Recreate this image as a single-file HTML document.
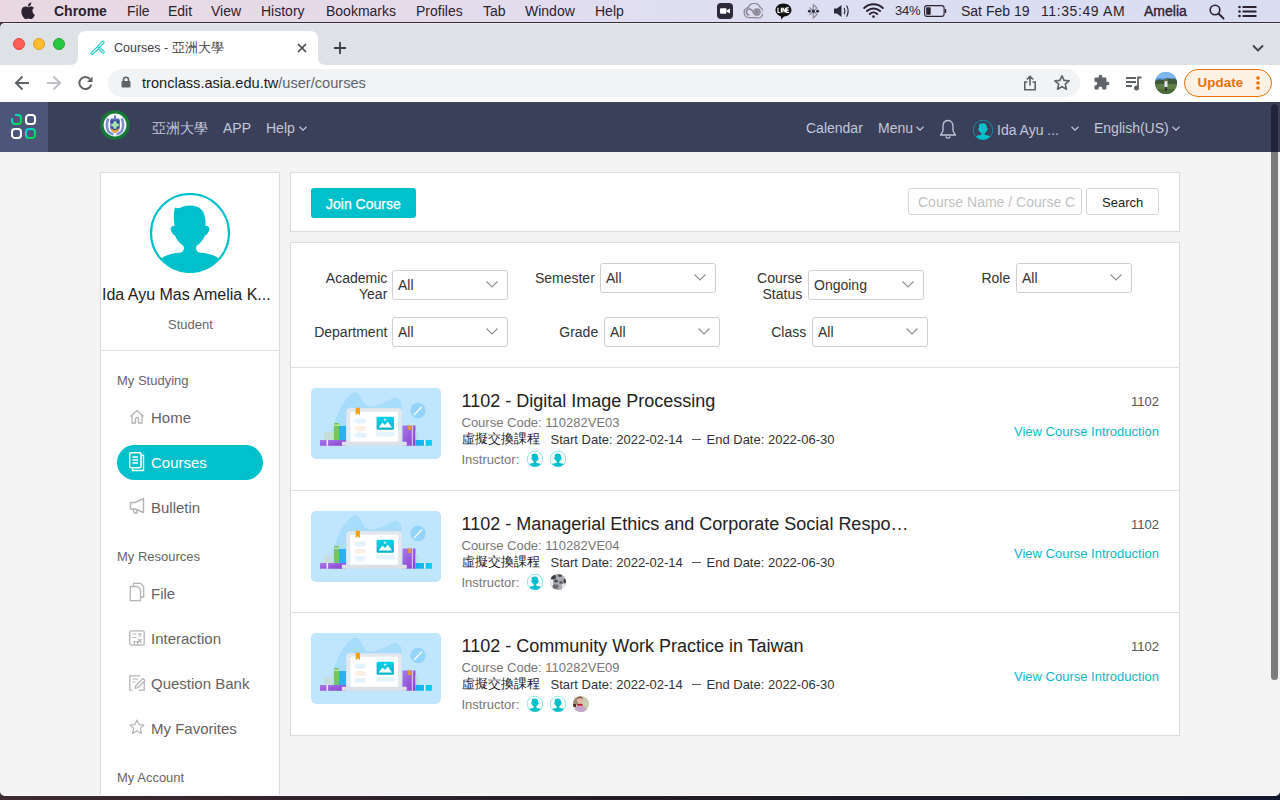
<!DOCTYPE html>
<html><head><meta charset="utf-8">
<style>
*{box-sizing:border-box;margin:0;padding:0;white-space:nowrap}
html,body{width:1280px;height:800px;overflow:hidden;background:#f3f3f3;font-family:"Liberation Sans",sans-serif;}
.a{position:absolute;white-space:nowrap}
#menubar{position:absolute;left:0;top:0;width:1280px;height:23px;background:linear-gradient(90deg,#e9d8e2 0%,#e6dae8 25%,#e0def1 50%,#dbdef2 75%,#d8ddf2 100%);border-bottom:1px solid #3b2d37}
#menubar .m{position:absolute;top:3px;font-size:14px;color:#2b2230;line-height:17px}
#tabbar{position:absolute;left:0;top:23px;width:1280px;height:42px;background:#dee1e6;border-top-left-radius:5px;box-shadow:inset 0 1px 0 #e9ecef}
#toolbar{position:absolute;left:0;top:65px;width:1280px;height:37px;background:#fff}
#header{position:absolute;left:0;top:102px;width:1280px;height:50px;background:#3b405a}
#hsq{position:absolute;left:0;top:0;width:48px;height:50px;background:#4e557a}
.hn{position:absolute;font-size:14px;color:#c3c7da;line-height:16px;top:18px}
.card{position:absolute;background:#fff;border:1px solid #dcdcdc}
.sbh{position:absolute;left:117px;font-size:13px;color:#666;line-height:15px}
.sbi{position:absolute;left:151px;font-size:15px;color:#636363;line-height:17px}
.lbl{position:absolute;font-size:14px;color:#333;line-height:16px;text-align:right}
.sel{position:absolute;height:30px;width:116px;border:1px solid #cfcfcf;border-radius:3px;background:#fff}
.sel span{position:absolute;left:5px;top:6px;font-size:14px;color:#333;line-height:16px}
.sel svg{position:absolute;right:9px;top:9.5px}
.ttl{position:absolute;left:461.5px;font-size:18px;color:#222;line-height:20px}
.cc{position:absolute;left:461.5px;font-size:13px;color:#777;line-height:15px}
.sd{position:absolute;left:461.5px;font-size:13px;color:#333;line-height:15px}
.ins{position:absolute;left:461.5px;font-size:13px;color:#777;line-height:15px}
.yr{position:absolute;right:121px;font-size:13px;color:#555;line-height:15px}
.vci{position:absolute;right:121px;font-size:13px;color:#0db8c5;line-height:15px}
.sep{position:absolute;left:291px;width:888px;height:1px;background:#e0e0e0}
.thumb{position:absolute;left:311px;width:130px;height:71px}
.av{position:absolute;width:16px;height:16px}
</style></head><body>
<svg width="0" height="0" style="position:absolute">
  <defs>
    <clipPath id="avclip"><circle cx="40" cy="40" r="38.5"/></clipPath>
    <symbol id="avatar" viewBox="0 0 80 80">
      <circle cx="40" cy="40" r="39" fill="none" stroke="#00c0cb" stroke-width="2.2"/>
      <path clip-path="url(#avclip)" fill="#00c0cb" d="M25 14.5C27 16 30 15 33 13.5C45 10.5 55 14 55.5 28L55.5 33C58.5 32.5 60 34.5 59 37.5C58 40.5 56.5 42 55 42.5C53 47.5 50 50.5 46.5 53C45.5 55.5 46 58 49 59.5C59 60.5 65 62 71 67L71 82L9 82L9 67C15 62 21 60.5 31 59.5C34 58 34.5 55.5 33.5 53C30 50.5 27 47.5 25 42.5C23.5 42 22 40.5 21 37.5C20 34.5 21.5 32.5 24.5 33L24 28C23.5 22 24 17.5 25 14.5Z"/>
    </symbol>
    <symbol id="thumb" viewBox="0 0 130 71">
      <defs>
        <linearGradient id="tg1" x1="0" y1="0" x2="0" y2="1"><stop offset="0" stop-color="#00d2ea"/><stop offset="1" stop-color="#00b0c8"/></linearGradient>
        <linearGradient id="tg2" x1="0" y1="0" x2="1" y2="1"><stop offset="0" stop-color="#a77be8"/><stop offset="1" stop-color="#8b3ccf"/></linearGradient>
        <linearGradient id="tg3" x1="0" y1="0" x2="1" y2="0"><stop offset="0" stop-color="#1aa8f0"/><stop offset="1" stop-color="#00d4f5"/></linearGradient>
      </defs>
      <rect x="0" y="0" width="130" height="71" rx="5" fill="#bfe6fc"/>
      <path d="M20 58C19 40 30 12 42 5C48 2 50 10 53 15C57 22 68 18 80 11C88 7 92 13 90 24L92 58Z" fill="#a8dcfb"/>
      <circle cx="107" cy="22.5" r="7.7" fill="#94d4fa"/>
      <path d="M103 27L111 18.5" stroke="#fff" stroke-width="1.1"/>
      <rect x="13" y="44" width="9" height="8.5" fill="#c6ded8"/>
      <rect x="23" y="35" width="5" height="17.5" fill="#74c46a"/>
      <rect x="23" y="36.5" width="5" height="1.5" fill="#b7e3a8"/>
      <rect x="28" y="38" width="7" height="14.5" fill="#2bb0f0"/>
      <rect x="9" y="52" width="26" height="5.7" fill="url(#tg2)"/>
      <rect x="15.5" y="52" width="1.6" height="5.7" fill="#f0e6ff"/>
      <rect x="91.5" y="37.5" width="13" height="20.2" fill="url(#tg2)"/>
      <rect x="100.8" y="37.5" width="1" height="20.2" fill="#e9d9ff"/>
      <rect x="97.2" y="37.5" width="2.6" height="4.5" fill="#f39c12"/>
      <rect x="104.5" y="43" width="3" height="14" fill="#b6e0e8"/>
      <rect x="104.5" y="52" width="16.5" height="5.7" fill="url(#tg3)"/>
      <rect x="113" y="52" width="1.6" height="5.7" fill="#e8f8ff"/>
      <rect x="35.3" y="20.3" width="55.5" height="34" rx="3.5" fill="#e4e8ed"/>
      <rect x="39.3" y="23.7" width="47.6" height="31" rx="1.5" fill="#fff"/>
      <rect x="30.8" y="53.7" width="65" height="4" rx="1" fill="#dde1e5"/>
      <path d="M44.7 19.7H48.9V27.2L46.8 25.3L44.7 27.2Z" fill="#f5a00f"/>
      <rect x="43.8" y="30.5" width="10.8" height="5" rx="2" fill="#e4f4fd"/>
      <rect x="43.8" y="37.9" width="10.8" height="5" rx="2" fill="#fdf0e2"/>
      <rect x="43.8" y="44.7" width="10.8" height="5" rx="2" fill="#e4f4fd"/>
      <rect x="65.6" y="28.8" width="17.3" height="13" rx="1.5" fill="url(#tg1)"/>
      <path d="M67.5 39.5L71.5 34.5L74 37L76.8 33.5L81 39.5Z" fill="#fff"/>
      <path d="M74 30.5V33M72.7 31.7H75.3" stroke="#fff" stroke-width="0.8"/>
      <rect x="64.8" y="44" width="19.2" height="4.6" rx="2" fill="#e4f4fd"/>
    </symbol>
  </defs>
</svg>

<!-- macOS menubar -->
<div id="menubar">
  <div class="a" style="left:20px;top:2px;width:15px;height:17px">
    <svg width="15" height="17" viewBox="0 0 15 17"><path d="M12.3 9.1c0-2 1.6-2.9 1.7-3-0.9-1.4-2.4-1.6-2.9-1.6-1.2-0.1-2.4 0.7-3 0.7-0.6 0-1.6-0.7-2.6-0.7C4.1 4.5 2.8 5.3 2.1 6.6c-1.5 2.6-0.4 6.4 1.1 8.5 0.7 1 1.5 2.2 2.6 2.1 1-0.04 1.4-0.7 2.7-0.7 1.2 0 1.6 0.7 2.7 0.7 1.1 0 1.8-1 2.5-2.1 0.8-1.2 1.1-2.3 1.1-2.4 0 0-2.2-0.8-2.2-3.4zM10.4 3.2c0.6-0.7 1-1.7 0.9-2.7-0.9 0-1.9 0.6-2.5 1.3-0.5 0.6-1 1.6-0.9 2.6 1 0.1 1.9-0.5 2.5-1.2z" fill="#2b2230"/></svg>
  </div>
  <div class="m" style="left:54px;font-weight:700">Chrome</div>
  <div class="m" style="left:127px">File</div>
  <div class="m" style="left:168px">Edit</div>
  <div class="m" style="left:211px">View</div>
  <div class="m" style="left:261px">History</div>
  <div class="m" style="left:326px">Bookmarks</div>
  <div class="m" style="left:416px">Profiles</div>
  <div class="m" style="left:483px">Tab</div>
  <div class="m" style="left:525px">Window</div>
  <div class="m" style="left:595px">Help</div>
  <svg class="a" style="left:717px;top:3px" width="16" height="16" viewBox="0 0 16 16"><rect x="0" y="0" width="16" height="16" rx="4" fill="#2e2a3a"/><rect x="3" y="5.2" width="6.5" height="5.6" rx="1" fill="#fff"/><path d="M10 7.2L13 5.5V10.5L10 8.8Z" fill="#fff"/></svg>
  <svg class="a" style="left:743px;top:3px" width="20" height="16" viewBox="0 0 20 16"><path d="M7.5 14.6H6A5 5 0 0 1 5.2 4.7A6.5 6.5 0 0 1 17.3 4.5A5.5 5.5 0 0 1 13 14.6Z" stroke="#8a8796" stroke-width="1.3" fill="none" stroke-linejoin="round"/><path d="M6.5 12A3 3 0 0 1 6.5 6C9 6 10 9 11 10.5C12 12 13 12 14 12A3 3 0 0 0 14 6C12.5 6 11.5 7 10.7 8" stroke="#8a8796" stroke-width="1.6" fill="none"/><circle cx="13.6" cy="9" r="2.3" fill="#8a8796"/></svg>
  <svg class="a" style="left:775px;top:3px" width="17" height="17" viewBox="0 0 17 17"><path d="M8.5 0.5C13 0.5 16.5 3.4 16.5 7C16.5 10.5 13.3 13.3 9 13.6L6 16.5V13.4C3 12.6 0.5 10.1 0.5 7C0.5 3.4 4 0.5 8.5 0.5Z" fill="#111"/><path d="M3 4.7V9.5H5.2M6.4 4.7V9.5M7.8 9.5V4.7L10.4 9.5V4.7M14 4.7H11.7V9.5H14M11.7 7.1H13.7" stroke="#fff" stroke-width="1.15" fill="none"/></svg>
  <svg class="a" style="left:807px;top:3px" width="13" height="17" viewBox="0 0 13 17"><path d="M2.5 4.5L10 11.5L6.3 15V1.5L10 5L2.5 12" stroke="#8e8b9a" stroke-width="1.2" fill="none" stroke-linejoin="round"/><circle cx="2.4" cy="8.3" r="1.45" fill="#2b2a3a"/><circle cx="6.4" cy="8.3" r="1.45" fill="#2b2a3a"/><circle cx="10.6" cy="8.3" r="1.45" fill="#2b2a3a"/></svg>
  <svg class="a" style="left:833px;top:3px" width="18" height="16" viewBox="0 0 18 16"><path d="M1 5.5H4L8.5 2V14L4 10.5H1Z" fill="#2b2a3a"/><path d="M11.3 5.5Q12.6 8 11.3 10.8M13.8 3Q16.5 8 13.8 13.2" stroke="#2b2a3a" stroke-width="1.2" fill="none" stroke-linecap="round"/></svg>
  <svg class="a" style="left:863px;top:2px" width="21" height="16" viewBox="0 0 21 16"><path d="M1.2 6A13.5 13.5 0 0 1 19.8 6M4 9A9.5 9.5 0 0 1 17 9M6.8 12A5.3 5.3 0 0 1 14.2 12" stroke="#2b2230" stroke-width="1.9" fill="none" stroke-linecap="round"/><circle cx="10.5" cy="14.6" r="1.3" fill="#2b2230"/></svg>
  <svg class="a" style="left:924px;top:5px" width="23" height="12" viewBox="0 0 23 12"><rect x="0.6" y="0.6" width="19.5" height="10.8" rx="2.5" stroke="#2b2230" stroke-width="1.1" fill="none"/><rect x="2.2" y="2.2" width="4.5" height="7.6" rx="0.8" fill="#2b2230"/><path d="M21.5 4V8" stroke="#2b2230" stroke-width="1.4"/></svg>
  <svg class="a" style="left:1209px;top:4px" width="16" height="16" viewBox="0 0 16 16"><circle cx="6" cy="6" r="4.8" stroke="#2b2230" stroke-width="1.6" fill="none"/><path d="M9.5 9.5L14.5 14.5" stroke="#2b2230" stroke-width="1.8" stroke-linecap="round"/></svg>
  <svg class="a" style="left:1238px;top:5px" width="19" height="13" viewBox="0 0 19 13"><g fill="#2b2230"><circle cx="1.5" cy="2" r="1.3"/><circle cx="1.5" cy="6.5" r="1.3"/><circle cx="1.5" cy="11" r="1.3"/><rect x="4.5" y="1" width="14" height="2" rx="0.5"/><rect x="4.5" y="5.5" width="14" height="2" rx="0.5"/><rect x="4.5" y="10" width="14" height="2" rx="0.5"/></g></svg>
  <div class="m" style="left:895px;font-size:13px;letter-spacing:-0.2px;top:1.5px">34%</div>
  <div class="m" style="left:961px">Sat Feb 19</div>
  <div class="m" style="left:1041px;letter-spacing:0.6px">11:35:49 AM</div>
  <div class="m" style="left:1144px;-webkit-text-stroke:0.35px #2b2230">Amelia</div>
</div>

<!-- tab bar -->
<div class="a" style="left:0;top:22px;width:8px;height:8px;background:#4a3344"></div>
<div id="tabbar">
  <div class="a" style="left:13px;top:15px;width:12px;height:12px;border-radius:50%;background:#fe5f57;border:0.5px solid #e0443e"></div>
  <div class="a" style="left:33px;top:15px;width:12px;height:12px;border-radius:50%;background:#febc2e;border:0.5px solid #dea123"></div>
  <div class="a" style="left:53px;top:15px;width:12px;height:12px;border-radius:50%;background:#28c840;border:0.5px solid #1aab29"></div>
  <svg class="a" style="left:70px;top:8px" width="258" height="34" viewBox="0 0 258 34"><path d="M0 34 Q8 34 8 26 L8 8 Q8 0 16 0 L240 0 Q248 0 248 8 L248 26 Q248 34 256 34 Z" fill="#fff"/></svg>
  <svg class="a" style="left:88px;top:13px" width="20" height="20" viewBox="0 0 20 20"><g stroke-linecap="round" fill="none"><path d="M15 6.3L10.5 10.8M10.5 11.2L4.2 17.2M10.8 11.6L15.2 16.1" stroke="#1ec8c8" stroke-width="3.3"/><path d="M15 6.3L11 10.3M9.6 12.1L4.2 17.2M11.8 12.6L15.2 16.1" stroke="#fff" stroke-width="1.1"/></g></svg>
  <div class="a" style="left:114px;top:17.5px;font-size:12.5px;color:#3c4043;line-height:15px">Courses - 亞洲大學</div>
  <svg class="a" style="left:297px;top:20px" width="10" height="10" viewBox="0 0 10 10"><path d="M1 1L9 9M9 1L1 9" stroke="#3c4043" stroke-width="1.6"/></svg>
  <svg class="a" style="left:333px;top:18px" width="14" height="14" viewBox="0 0 14 14"><path d="M7 1V13M1 7H13" stroke="#3c4043" stroke-width="1.8"/></svg>
  <svg class="a" style="left:1252px;top:21px" width="12" height="8" viewBox="0 0 12 8"><path d="M1 1.5L6 6.5L11 1.5" stroke="#3c4043" stroke-width="1.8" fill="none"/></svg>
</div>
<!-- toolbar -->
<div id="toolbar">
  <svg class="a" style="left:14px;top:10px" width="16" height="16" viewBox="0 0 16 16"><path d="M15 8H2.5M8.5 1.5L2 8L8.5 14.5" stroke="#5f6368" stroke-width="2" fill="none"/></svg>
  <svg class="a" style="left:46px;top:10px" width="16" height="16" viewBox="0 0 16 16"><path d="M1 8H13.5M7.5 1.5L14 8L7.5 14.5" stroke="#bdc1c6" stroke-width="2" fill="none"/></svg>
  <svg class="a" style="left:78px;top:10px" width="16" height="16" viewBox="0 0 16 16"><path d="M13.2 9.5 A6 6 0 1 1 12 4.2" stroke="#5f6368" stroke-width="2" fill="none"/><path d="M14.5 1.5 V7 H9 Z" fill="#5f6368"/></svg>
  <div class="a" style="left:108px;top:4px;width:972px;height:28px;border-radius:14px;background:#f1f3f4"></div>
  <svg class="a" style="left:121px;top:11px" width="10" height="12" viewBox="0 0 10 12"><rect x="0.5" y="5" width="9" height="6.5" rx="1" fill="#5f6368"/><path d="M2.5 5.5V3.8A2.5 2.5 0 0 1 7.5 3.8V5.5" stroke="#5f6368" stroke-width="1.6" fill="none"/></svg>
  <div class="a" style="left:142px;top:10px;font-size:14.6px;line-height:17px;color:#202124">tronclass.asia.edu.tw<span style="color:#5f6368">/user/courses</span></div>
  <svg class="a" style="left:1023px;top:10px" width="14" height="16" viewBox="0 0 14 16"><path d="M7 10.5V1.5M3.8 4.5L7 1.3L10.2 4.5M4.5 7H1.8V14.7H12.2V7H9.5" stroke="#5f6368" stroke-width="1.6" fill="none"/></svg>
  <svg class="a" style="left:1053px;top:9px" width="18" height="18" viewBox="0 0 18 18"><path d="M9 1.8L11.1 6.4L16.1 6.9L12.3 10.2L13.4 15.2L9 12.6L4.6 15.2L5.7 10.2L1.9 6.9L6.9 6.4Z" stroke="#5f6368" stroke-width="1.6" fill="none" stroke-linejoin="round"/></svg>
  <svg class="a" style="left:1093px;top:73px;top:9px" width="17" height="17" viewBox="0 0 24 24"><path fill="#5f6368" d="M20.5 11H19V7c0-1.1-.9-2-2-2h-4V3.5C13 2.12 11.88 1 10.5 1S8 2.12 8 3.5V5H4c-1.1 0-1.99.9-1.99 2v3.8H3.5c1.49 0 2.7 1.21 2.7 2.7s-1.21 2.7-2.7 2.7H2V20c0 1.1.9 2 2 2h3.8v-1.5c0-1.490 1.21-2.7 2.7-2.7 1.49 0 2.7 1.21 2.7 2.7V22H17c1.1 0 2-.9 2-2v-4h1.5c1.38 0 2.5-1.12 2.5-2.5S21.88 11 20.5 11z"/></svg>
  <svg class="a" style="left:1125px;top:10px" width="18" height="16" viewBox="0 0 18 16"><path d="M1 3H11M1 7H11M1 11H7" stroke="#5f6368" stroke-width="1.8"/><path d="M13 13V2.5H16.5" stroke="#5f6368" stroke-width="1.8" fill="none"/><circle cx="11.5" cy="13" r="2.5" fill="#5f6368"/></svg>
  <svg class="a" style="left:1155px;top:7px" width="22" height="22" viewBox="0 0 22 22"><defs><clipPath id="pc"><circle cx="11" cy="11" r="11"/></clipPath></defs><g clip-path="url(#pc)"><rect width="22" height="22" fill="#5a9ee0"/><rect y="0" width="22" height="6" fill="#7fb6ec"/><path d="M0 9Q4 6 8 8Q12 5 16 7Q20 6 22 8V13H0Z" fill="#3f5a3a"/><rect y="12" width="22" height="10" fill="#5f7f45"/><rect y="17" width="22" height="5" fill="#4a6a35"/><rect x="9.5" y="9" width="3" height="6" fill="#e8e8f0"/><circle cx="11" cy="8.3" r="1.2" fill="#8a6a55"/><rect x="10" y="15" width="2" height="4" fill="#334"/></g></svg>
  <div class="a" style="left:1184px;top:4px;width:88px;height:28px;border-radius:14px;border:1.2px solid #e8710a;background:#fef2e7"></div>
  <div class="a" style="left:1197.5px;top:9px;font-size:13.3px;font-weight:700;line-height:17px;color:#e8710a;letter-spacing:0.1px">Update</div>
  <svg class="a" style="left:1256px;top:10px" width="4" height="16" viewBox="0 0 4 16"><circle cx="2" cy="3" r="1.8" fill="#e8710a"/><circle cx="2" cy="8" r="1.8" fill="#e8710a"/><circle cx="2" cy="13" r="1.8" fill="#e8710a"/></svg>
</div>

<!-- page header -->
<div id="header">
  <div id="hsq"></div>
  <svg class="a" style="left:11px;top:12px" width="26" height="26" viewBox="0 0 26 26">
    <defs><linearGradient id="gg" x1="0" y1="0" x2="1" y2="1"><stop offset="0" stop-color="#00c8f0"/><stop offset="0.5" stop-color="#00dd90"/><stop offset="1" stop-color="#00d83a"/></linearGradient></defs>
    <path d="M4 1H7A3 3 0 0 1 10 4V7A3 3 0 0 1 7 10H4A3 3 0 0 1 1 7V4" stroke="url(#gg)" stroke-width="2.1" fill="none"/>
    <rect x="15" y="1" width="9" height="9" rx="3" stroke="#fff" stroke-width="2.1" fill="none"/>
    <rect x="1" y="15" width="9" height="9" rx="3" stroke="#fff" stroke-width="2.1" fill="none"/>
    <rect x="15" y="15" width="9" height="9" rx="3" stroke="url(#gg)" stroke-width="2.1" fill="none"/>
  </svg>
  <svg class="a" style="left:100px;top:8px" width="30" height="30" viewBox="0 0 30 30">
    <circle cx="15" cy="15" r="14.8" fill="#157a35"/>
    <circle cx="15" cy="15" r="11.4" fill="#f6f7fb"/>
    <path d="M8.2 8.5Q5.5 15 8.2 21Q10.5 24 13.5 24.5M21.8 8.5Q24.5 15 21.8 21Q19.5 24 16.5 24.5" stroke="#7d8fcf" stroke-width="2.6" fill="none"/>
    <path d="M10.3 9.5H19.7V17Q19.7 20.5 15 22.5Q10.3 20.5 10.3 17Z" fill="#2e3f9c"/>
    <path d="M11 8.5H19V10.5H11Z" fill="#5568b8"/>
    <path d="M15 5.5V8.5" stroke="#5568b8" stroke-width="1.8"/>
    <path d="M13.4 11.2H16.6V13.4H18.8V16.6H16.6V18.8H13.4V16.6H11.2V13.4H13.4Z" fill="#a6e3a6"/>
    <path d="M11 18Q13 20 15 20Q17 20 19 18L18.5 20.5Q17 22.5 15 23Q13 22.5 11.5 20.5Z" fill="#e39a35"/>
  </svg>
  <svg class="a" style="left:299px;top:24px" width="8" height="5" viewBox="0 0 8 5"><path d="M0.5 0.8L4 4.2L7.5 0.8" stroke="#c3c7da" stroke-width="1.2" fill="none"/></svg>
  <svg class="a" style="left:916px;top:24px" width="8" height="5" viewBox="0 0 8 5"><path d="M0.5 0.8L4 4.2L7.5 0.8" stroke="#c3c7da" stroke-width="1.2" fill="none"/></svg>
  <svg class="a" style="left:939px;top:17px" width="18" height="21" viewBox="0 0 18 21"><path d="M9 1.5C5.5 1.5 4 4.5 4 7.5V12L1.5 16H16.5L14 12V7.5C14 4.5 12.5 1.5 9 1.5Z M6.8 17.5A2.3 2.3 0 0 0 11.2 17.5" stroke="#c3c7da" stroke-width="1.3" fill="none" stroke-linejoin="round"/></svg>
  <svg class="a" style="left:972.5px;top:17.5px" width="20" height="20"><use href="#avatar"/></svg>
  <svg class="a" style="left:1071px;top:24px" width="8" height="5" viewBox="0 0 8 5"><path d="M0.5 0.8L4 4.2L7.5 0.8" stroke="#c3c7da" stroke-width="1.2" fill="none"/></svg>
  <svg class="a" style="left:1172px;top:24px" width="8" height="5" viewBox="0 0 8 5"><path d="M0.5 0.8L4 4.2L7.5 0.8" stroke="#c3c7da" stroke-width="1.2" fill="none"/></svg>
  <div class="hn" style="left:152px">亞洲大學</div>
  <div class="hn" style="left:223px">APP</div>
  <div class="hn" style="left:266px">Help</div>
  <div class="hn" style="left:806px">Calendar</div>
  <div class="hn" style="left:878px">Menu</div>
  <div class="hn" style="left:997px;top:20px">Ida Ayu ...</div>
  <div class="hn" style="left:1094px">English(US)</div>
</div>

<!-- sidebar -->
<div class="card" style="left:100px;top:172px;width:180px;height:640px"></div>
<svg class="a" style="left:150px;top:193px" width="80" height="80"><use href="#avatar"/></svg>
<div class="a" style="left:102px;top:286px;font-size:16px;line-height:18px;color:#222">Ida Ayu Mas Amelia K...</div>
<div class="a" style="left:168px;top:317px;font-size:13px;line-height:15px;color:#666">Student</div>
<div class="a" style="left:101px;top:350px;width:178px;height:1px;background:#e2e2e2"></div>
<div class="sbh" style="top:373px">My Studying</div>
<svg class="a" style="left:129px;top:409px" width="16" height="15" viewBox="0 0 16 15"><path d="M1.5 7.5L8 1.5L14.5 7.5M3 6.2V14H6.5V10A1.5 1.5 0 0 1 9.5 10V14H13V6.2" stroke="#b4b4b4" stroke-width="1.3" fill="none" stroke-linejoin="round"/></svg>
<div class="sbi" style="top:409px">Home</div>
<div class="a" style="left:117px;top:445px;width:146px;height:35px;border-radius:17.5px;background:#00c0cb"></div>
<svg class="a" style="left:128px;top:451px" width="18" height="21" viewBox="0 0 18 21"><path d="M4.5 17.5V19.5H15.5V4.5H13.5" stroke="#fff" stroke-width="1.4" fill="none"/><rect x="1.7" y="1.7" width="11.3" height="15" rx="1.5" stroke="#fff" stroke-width="1.5" fill="none"/><path d="M4.5 6H10M4.5 9H10M4.5 12H10" stroke="#fff" stroke-width="1.5"/></svg>
<div class="sbi" style="top:454px;color:#fff">Courses</div>
<svg class="a" style="left:129px;top:497px" width="16" height="18" viewBox="0 0 16 18"><path d="M1.5 5.5H6L14.5 1.5V15.5L6 12H1.5Z" stroke="#b4b4b4" stroke-width="1.4" fill="none" stroke-linejoin="round"/><path d="M4 12.5L5.5 16H8L7.5 13" stroke="#b4b4b4" stroke-width="1.3" fill="none"/></svg>
<div class="sbi" style="top:499px">Bulletin</div>
<div class="sbh" style="top:548.5px">My Resources</div>
<svg class="a" style="left:129px;top:582px" width="16" height="20" viewBox="0 0 16 20"><path d="M4.5 4.5V1.3H11.5L14.7 4.5V15H11.5" stroke="#b4b4b4" stroke-width="1.3" fill="none"/><path d="M1.3 4.5H8.5L11.5 7.5V18.7H1.3Z" stroke="#b4b4b4" stroke-width="1.3" fill="none" stroke-linejoin="round"/></svg>
<div class="sbi" style="top:585px">File</div>
<svg class="a" style="left:129px;top:630px" width="16" height="16" viewBox="0 0 16 16"><rect x="0.8" y="0.8" width="14.4" height="14.4" rx="1.5" stroke="#b4b4b4" stroke-width="1.3" fill="none"/><path d="M3.5 4H7.5M3.5 7.5H7.5M9.5 3.5L12.5 6.5M12.5 3.5L9.5 6.5M9 9L12.5 12.5M12.5 9L9 12.5M5.5 15V11.5H8.5V15" stroke="#b4b4b4" stroke-width="1.1" fill="none"/></svg>
<div class="sbi" style="top:630px">Interaction</div>
<svg class="a" style="left:129px;top:675px" width="17" height="16" viewBox="0 0 17 16"><path d="M11 0.8H0.8V15.2H3.5M9.5 15.2H15.2V7" stroke="#b4b4b4" stroke-width="1.3" fill="none"/><path d="M3.5 4H9M3.5 7H6.5" stroke="#b4b4b4" stroke-width="1.2"/><path d="M6 13.5L7 10.5L14 3.5L16 5.5L9 12.5Z" stroke="#b4b4b4" stroke-width="1.2" fill="none" stroke-linejoin="round"/></svg>
<div class="sbi" style="top:675px">Question Bank</div>
<svg class="a" style="left:129px;top:719px" width="16" height="16" viewBox="0 0 16 16"><path d="M8 1L10.1 5.6L15 6.1L11.3 9.4L12.4 14.4L8 11.8L3.6 14.4L4.7 9.4L1 6.1L5.9 5.6Z" stroke="#b4b4b4" stroke-width="1.2" fill="none" stroke-linejoin="round"/></svg>
<div class="sbi" style="top:720px">My Favorites</div>
<div class="sbh" style="top:770px">My Account</div>

<!-- top card -->
<div class="card" style="left:290px;top:172px;width:890px;height:60px"></div>
<div class="a" style="left:311px;top:188px;width:105px;height:30px;border-radius:3px;background:#00c1cb"></div>
<div class="a" style="left:326px;top:196px;font-size:14px;line-height:16px;color:#fff;-webkit-text-stroke:0.25px #fff">Join Course</div>
<div class="a" style="left:908px;top:188px;width:174px;height:27px;border:1px solid #d6d6d6;border-radius:3px;background:#fff"></div>
<div class="a" style="left:918px;top:194px;font-size:14px;line-height:16px;color:#c2c2c2">Course Name / Course C</div>
<div class="a" style="left:1086px;top:188px;width:73px;height:27px;border:1px solid #d6d6d6;border-radius:3px;background:#fff"></div>
<div class="a" style="left:1102px;top:195px;font-size:13px;line-height:15px;color:#222">Search</div>

<!-- main card -->
<div class="card" style="left:290px;top:242px;width:890px;height:494px"></div>
<div class="lbl" style="right:892.7px;top:270px">Academic<br>Year</div>
<div class="sel" style="left:392px;top:270px"><span>All</span><svg width="12" height="7" viewBox="0 0 12 7"><path d="M0.5 0.5L6 6L11.5 0.5" stroke="#8f8f8f" stroke-width="1.1" fill="none"/></svg></div>
<div class="lbl" style="right:685.2px;top:270px">Semester</div>
<div class="sel" style="left:600px;top:263px"><span>All</span><svg width="12" height="7" viewBox="0 0 12 7"><path d="M0.5 0.5L6 6L11.5 0.5" stroke="#8f8f8f" stroke-width="1.1" fill="none"/></svg></div>
<div class="lbl" style="right:477.8px;top:270px">Course<br>Status</div>
<div class="sel" style="left:808px;top:270px"><span>Ongoing</span><svg width="12" height="7" viewBox="0 0 12 7"><path d="M0.5 0.5L6 6L11.5 0.5" stroke="#8f8f8f" stroke-width="1.1" fill="none"/></svg></div>
<div class="lbl" style="right:269.8px;top:270px">Role</div>
<div class="sel" style="left:1016px;top:263px"><span>All</span><svg width="12" height="7" viewBox="0 0 12 7"><path d="M0.5 0.5L6 6L11.5 0.5" stroke="#8f8f8f" stroke-width="1.1" fill="none"/></svg></div>
<div class="lbl" style="right:892.7px;top:324px">Department</div>
<div class="sel" style="left:392px;top:317px"><span>All</span><svg width="12" height="7" viewBox="0 0 12 7"><path d="M0.5 0.5L6 6L11.5 0.5" stroke="#8f8f8f" stroke-width="1.1" fill="none"/></svg></div>
<div class="lbl" style="right:681.8px;top:324px">Grade</div>
<div class="sel" style="left:604px;top:317px"><span>All</span><svg width="12" height="7" viewBox="0 0 12 7"><path d="M0.5 0.5L6 6L11.5 0.5" stroke="#8f8f8f" stroke-width="1.1" fill="none"/></svg></div>
<div class="lbl" style="right:473.8px;top:324px">Class</div>
<div class="sel" style="left:812px;top:317px"><span>All</span><svg width="12" height="7" viewBox="0 0 12 7"><path d="M0.5 0.5L6 6L11.5 0.5" stroke="#8f8f8f" stroke-width="1.1" fill="none"/></svg></div>
<div class="sep" style="top:367px"></div>
<div class="sep" style="top:490px"></div>
<div class="sep" style="top:612px"></div>
<svg class="thumb" style="top:388px" width="130" height="71"><use href="#thumb"/></svg>
<div class="ttl" style="top:390.5px">1102 - Digital Image Processing</div>
<div class="cc" style="top:414.8px">Course Code: 110282VE03</div>
<div class="sd" style="top:431.6px"><span style="color:#222;position:relative;top:-0.5px">虛擬交換課程</span><span style="position:absolute;left:89px">Start Date: 2022-02-14</span><span style="position:absolute;left:230.5px;top:7px;width:8.5px;height:1.2px;background:#555"></span><span style="position:absolute;left:245px">End Date: 2022-06-30</span></div>
<div class="ins" style="top:452px">Instructor:</div>
<svg class="av" style="left:526.7px;top:450.8px" width="16" height="16"><use href="#avatar"/></svg>
<svg class="av" style="left:549.9px;top:450.8px" width="16" height="16"><use href="#avatar"/></svg>
<div class="yr" style="top:394px">1102</div>
<div class="vci" style="top:423.6px">View Course Introduction</div>
<svg class="thumb" style="top:511px" width="130" height="71"><use href="#thumb"/></svg>
<div class="ttl" style="top:513.5px">1102 - Managerial Ethics and Corporate Social Respo…</div>
<div class="cc" style="top:537.8px">Course Code: 110282VE04</div>
<div class="sd" style="top:554.6px"><span style="color:#222;position:relative;top:-0.5px">虛擬交換課程</span><span style="position:absolute;left:89px">Start Date: 2022-02-14</span><span style="position:absolute;left:230.5px;top:7px;width:8.5px;height:1.2px;background:#555"></span><span style="position:absolute;left:245px">End Date: 2022-06-30</span></div>
<div class="ins" style="top:575px">Instructor:</div>
<svg class="av" style="left:526.7px;top:573.8px" width="16" height="16"><use href="#avatar"/></svg>
<svg class="av" style="left:549.9px;top:573.8px" width="16" height="16" viewBox="0 0 16 16"><defs><clipPath id="c16g"><circle cx="8" cy="8" r="8"/></clipPath></defs><g clip-path="url(#c16g)"><rect width="16" height="16" fill="#a9abb1"/><rect x="0" y="4" width="3" height="12" fill="#e9eaee"/><ellipse cx="3" cy="3" rx="3" ry="2.5" fill="#3e3e44"/><ellipse cx="10" cy="1.5" rx="2" ry="1.5" fill="#4a4a50"/><ellipse cx="6" cy="7" rx="2" ry="1.6" fill="#4a4a52"/><ellipse cx="11" cy="8.5" rx="1.7" ry="1.2" fill="#55555c"/><ellipse cx="15" cy="7" rx="1.5" ry="2" fill="#3a3a40"/><ellipse cx="5.5" cy="12.5" rx="3" ry="2.2" fill="#6d6e74"/><rect x="12" y="10" width="4" height="6" fill="#e4e5ea"/></g></svg>
<div class="yr" style="top:517px">1102</div>
<div class="vci" style="top:545.6px">View Course Introduction</div>
<svg class="thumb" style="top:633px" width="130" height="71"><use href="#thumb"/></svg>
<div class="ttl" style="top:635.5px">1102 - Community Work Practice in Taiwan</div>
<div class="cc" style="top:659.8px">Course Code: 110282VE09</div>
<div class="sd" style="top:676.6px"><span style="color:#222;position:relative;top:-0.5px">虛擬交換課程</span><span style="position:absolute;left:89px">Start Date: 2022-02-14</span><span style="position:absolute;left:230.5px;top:7px;width:8.5px;height:1.2px;background:#555"></span><span style="position:absolute;left:245px">End Date: 2022-06-30</span></div>
<div class="ins" style="top:697px">Instructor:</div>
<svg class="av" style="left:526.7px;top:695.8px" width="16" height="16"><use href="#avatar"/></svg>
<svg class="av" style="left:549.9px;top:695.8px" width="16" height="16"><use href="#avatar"/></svg>
<svg class="av" style="left:573.1px;top:695.8px" width="16" height="16" viewBox="0 0 16 16"><defs><clipPath id="c16p"><circle cx="8" cy="8" r="8"/></clipPath></defs><g clip-path="url(#c16p)"><rect width="16" height="16" fill="#c8cfb0"/><rect x="0" y="0" width="5" height="9" fill="#a08a78"/><rect x="0" y="8" width="3" height="3" fill="#5a2a2a"/><ellipse cx="7" cy="4" rx="3" ry="3.6" fill="#e9b7a8"/><path d="M4 4Q4 0.5 7 0.5Q10 0.5 10 4L9.3 2.5Q7 1.5 4.8 2.5Z" fill="#6b4a3a"/><ellipse cx="7" cy="9" rx="2.8" ry="1.3" fill="#c8102e"/><path d="M1 16Q1 9.5 7 9.5Q14 9.5 14 16Z" fill="#c4a6c8"/></g></svg>
<div class="yr" style="top:639px">1102</div>
<div class="vci" style="top:668.6px">View Course Introduction</div>

<div class="a" style="left:1271px;top:104px;width:7px;height:576px;border-radius:3.5px;background:#7b7b7b"></div>
<div class="a" style="left:1271px;top:104px;width:7px;height:48px;border-radius:3.5px 3.5px 0 0;background:#20243a"></div>
<div class="a" style="left:0;top:795px;width:1280px;height:5px;background:linear-gradient(90deg,#3e2a33,#231c24 50%,#121830)"></div>
<div class="a" style="left:0;top:795px;width:1280px;height:1px;background:#fbfbfb"></div>
<div class="a" style="left:0;top:789px;width:7px;height:7px;background:#3e2a33"></div>
<div class="a" style="left:0;top:785px;width:12px;height:11px;background:#f3f3f3;border-bottom-left-radius:5px;border-bottom:1px solid #fbfbfb"></div>
<div class="a" style="left:1273px;top:789px;width:7px;height:7px;background:#121830"></div>
<div class="a" style="left:1268px;top:785px;width:12px;height:11px;background:#f3f3f3;border-bottom-right-radius:5px;border-bottom:1px solid #fbfbfb"></div>
</body></html>
